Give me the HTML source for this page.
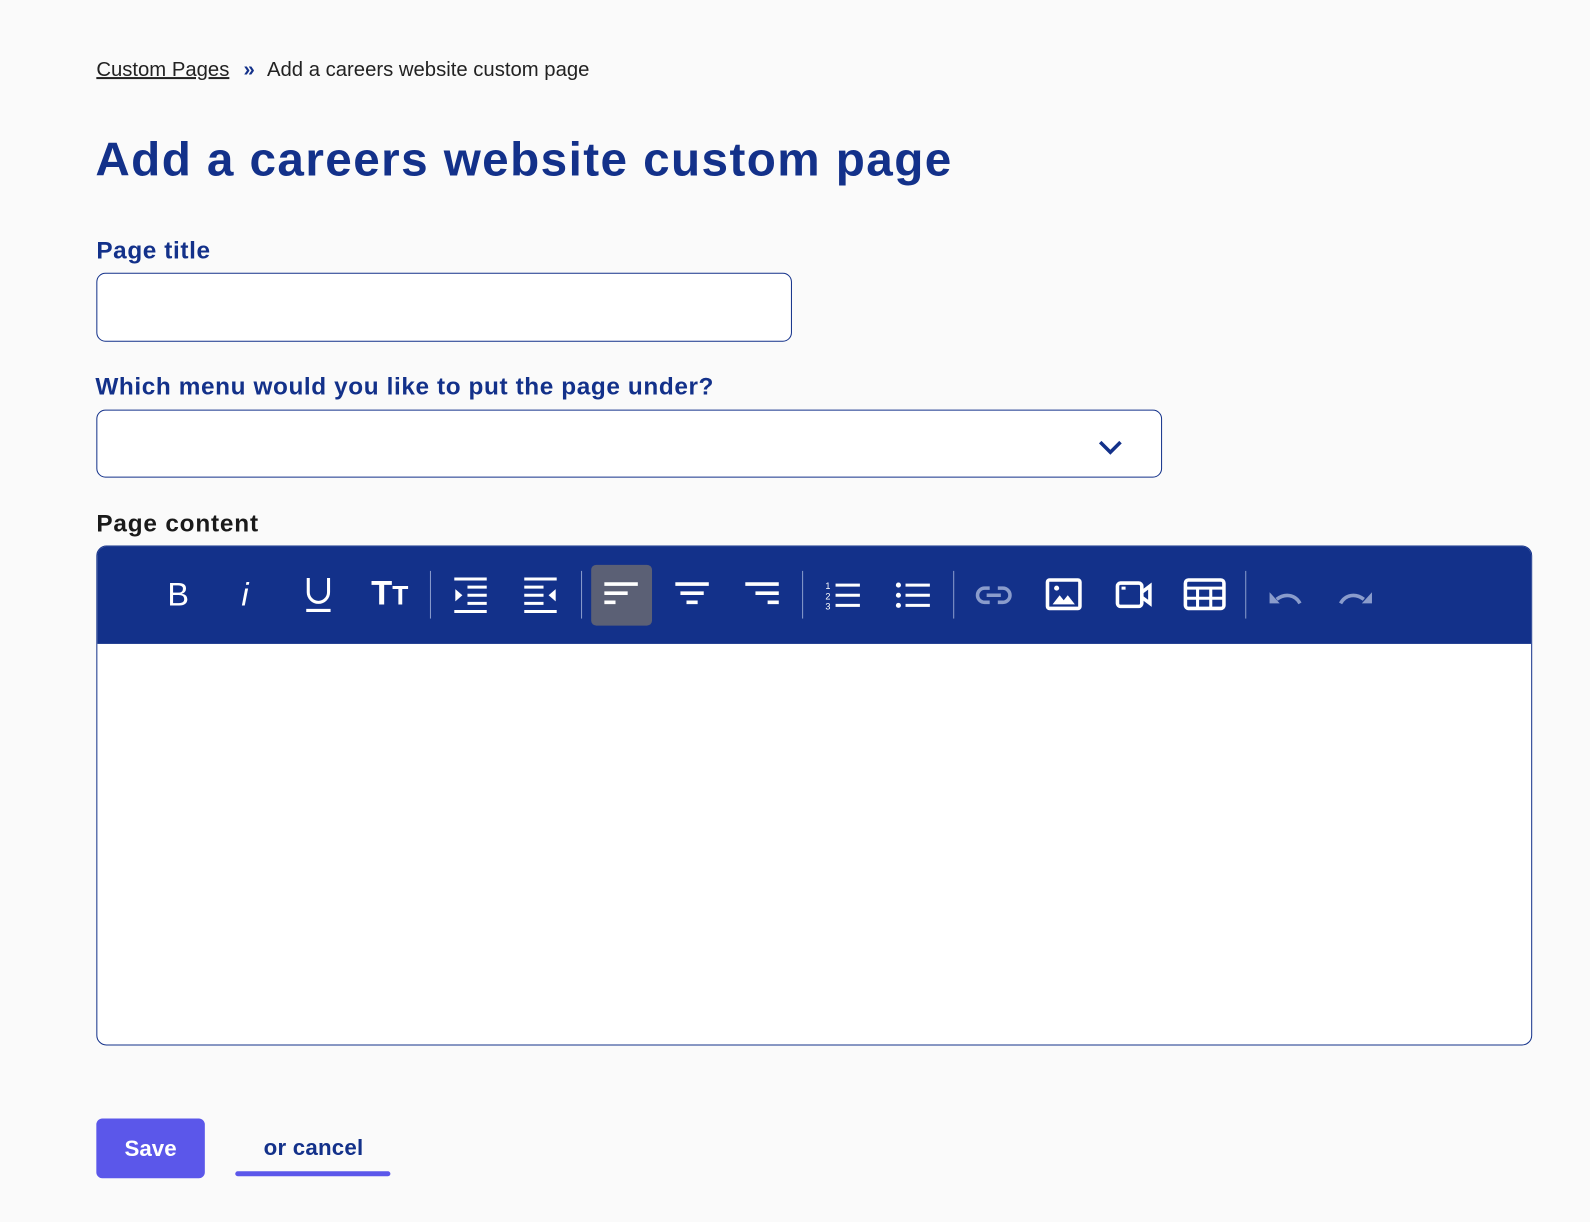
<!DOCTYPE html>
<html><head><style>
body{margin:0;background:#fafafa;font-family:"Liberation Sans",sans-serif;width:1590px;height:1222px;position:relative;overflow:hidden}
#w{position:absolute;left:0;top:0;width:1568px;height:1205px;transform:scale(1.01403);transform-origin:0 0}
.a{position:absolute}
.navy{color:#13318a}
.box{position:absolute;background:#fff;border:1px solid #13318a;border-radius:9px;box-sizing:border-box}
.tb svg{position:absolute;top:567px;overflow:visible}
.sep{position:absolute;top:563px;width:1px;height:47px;background:#8a9ccc}
.lbl{font-size:24px;font-weight:bold;letter-spacing:0.6px}
</style></head><body><div id="w">
<div class="a" style="left:95px;top:58px;font-size:20px;color:#222"><span style="text-decoration:underline">Custom Pages</span><span class="navy" style="margin:0 12px 0 14px;font-weight:bold">»</span>Add a careers website custom page</div>
<div class="a navy" style="left:94px;top:129px;font-size:47px;font-weight:bold;letter-spacing:1.4px">Add a careers website custom page</div>
<div class="a navy lbl" style="left:95px;top:234px">Page title</div>
<div class="box" style="left:95px;top:269px;width:686px;height:68px"></div>
<div class="a navy lbl" style="left:94px;top:368px">Which menu would you like to put the page under?</div>
<div class="box" style="left:95px;top:404px;width:1051px;height:67px"></div>
<svg class="a" style="left:1082px;top:433px" width="26" height="16"><path d="M3 3l10 10 10-10" stroke="#13318a" stroke-width="3.5" fill="none"/></svg>
<div class="a lbl" style="left:95px;top:503px;color:#1a1a1a;letter-spacing:0.8px">Page content</div>
<div class="box" style="left:95px;top:538px;width:1416px;height:493px;border-radius:10px;overflow:hidden"><div style="height:96px;background:#13318a"></div></div>
<div class="a" style="left:583px;top:557px;width:60px;height:60px;background:#5b6075;border-radius:5px"></div>
<div class="sep" style="left:424px"></div><div class="sep" style="left:573px"></div><div class="sep" style="left:791px"></div><div class="sep" style="left:940px"></div><div class="sep" style="left:1228px"></div>
<div class="tb">
<div class="a" style="left:165px;top:568px;color:#fff;font-size:32px">B</div>
<div class="a" style="left:238px;top:568px;color:#fff;font-size:32px;font-style:italic">i</div>
<svg style="left:301px" width="26" height="40"><path d="M3 3v14a10 10 0 0 0 20 0V3" stroke="#fff" stroke-width="3" fill="none"/><path d="M1 35h24" stroke="#fff" stroke-width="3"/></svg>
<div class="a" style="left:366px;top:566px;color:#fff;font-size:34px;font-weight:bold">T<span style="font-size:26px">T</span></div>
<svg style="left:447px" width="34" height="40"><path d="M1 4h32M14 12h19M14 20h19M14 28h19M1 36h32" stroke="#fff" stroke-width="3"/><path d="M2 14l7 6-7 6z" fill="#fff"/></svg>
<svg style="left:516px" width="34" height="40"><path d="M1 4h32M1 12h19M1 20h19M1 28h19M1 36h32" stroke="#fff" stroke-width="3"/><path d="M32 14l-7 6 7 6z" fill="#fff"/></svg>
<svg style="left:596px" width="34" height="40"><path d="M0 9h33M0 18h23M0 27h11" stroke="#fff" stroke-width="3.5"/></svg>
<svg style="left:666px" width="34" height="40"><path d="M0 9h33M5 18h23M11 27h11" stroke="#fff" stroke-width="3.5"/></svg>
<svg style="left:735px" width="34" height="40"><path d="M0 9h33M10 18h23M22 27h11" stroke="#fff" stroke-width="3.5"/></svg>
<svg style="left:814px" width="36" height="40"><text x="0" y="14" fill="#fff" font-size="9" font-family="Liberation Sans">1</text><text x="0" y="24" fill="#fff" font-size="9" font-family="Liberation Sans">2</text><text x="0" y="34" fill="#fff" font-size="9" font-family="Liberation Sans">3</text><path d="M10 10h24M10 20h24M10 30h24" stroke="#fff" stroke-width="3"/></svg>
<svg style="left:883px" width="36" height="40"><circle cx="3" cy="10" r="2.5" fill="#fff"/><circle cx="3" cy="20" r="2.5" fill="#fff"/><circle cx="3" cy="30" r="2.5" fill="#fff"/><path d="M10 10h24M10 20h24M10 30h24" stroke="#fff" stroke-width="3"/></svg>
<svg style="left:962px" width="36" height="40"><path d="M14 13h-5a7 7 0 0 0 0 14h5M22 13h5a7 7 0 0 1 0 14h-5M11 20h14" stroke="#8a9ccc" stroke-width="3.5" fill="none"/></svg>
<svg style="left:1031px" width="36" height="40"><rect x="2" y="5" width="32" height="28" rx="2" stroke="#fff" stroke-width="3.5" fill="none"/><circle cx="11" cy="13" r="2.5" fill="#fff"/><path d="M7 29l7-9 4 5 4-5 7 9z" fill="#fff"/></svg>
<svg style="left:1100px" width="38" height="40"><rect x="2" y="8" width="24" height="23" rx="3" stroke="#fff" stroke-width="3.5" fill="none"/><path d="M26 17l8-6v17l-8-6" stroke="#fff" stroke-width="3.5" fill="none"/><path d="M6 13h4" stroke="#fff" stroke-width="3"/></svg>
<svg style="left:1167px" width="42" height="40"><rect x="2" y="5" width="38" height="28" rx="3" stroke="#fff" stroke-width="3.5" fill="none"/><path d="M2 13h38M2 23h38M14 13v20M27 13v20" stroke="#fff" stroke-width="3"/></svg>
<svg style="left:1251px" width="34" height="40"><path d="M31 28c-5-9-15-10-23-4" stroke="#8a9ccc" stroke-width="3.5" fill="none"/><path d="M1 17v11h10z" fill="#8a9ccc"/></svg>
<svg style="left:1320px" width="34" height="40"><path d="M2 28c5-9 15-10 23-4" stroke="#8a9ccc" stroke-width="3.5" fill="none"/><path d="M33 17v11h-10z" fill="#8a9ccc"/></svg>
</div>
<div class="a" style="left:95px;top:1103px;width:107px;height:59px;background:#5b57ea;border-radius:6px;color:#fff;font-weight:bold;font-size:22px;line-height:59px;text-align:center">Save</div>
<div class="a navy" style="left:260px;top:1119px;font-size:22px;font-weight:bold;letter-spacing:0.2px">or cancel</div>
<div class="a" style="left:232px;top:1155px;width:153px;height:5px;background:#5b57ea;border-radius:3px"></div>
</div></body></html>
